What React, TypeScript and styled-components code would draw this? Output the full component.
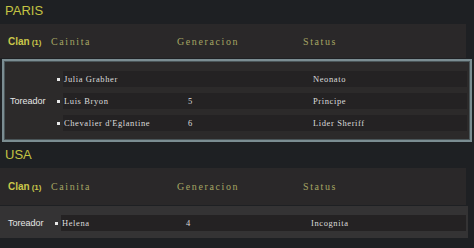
import React from 'react';
import styled, { createGlobalStyle } from 'styled-components';

interface Cainita {
  name: string;
  generacion?: number;
  status: string;
}

interface City {
  name: string;
  clan: string;
  boxed: boolean;
  members: Cainita[];
}

const cities: City[] = [
  {
    name: 'PARIS',
    clan: 'Toreador',
    boxed: true,
    members: [
      { name: 'Julia Grabher', status: 'Neonato' },
      { name: 'Luis Bryon', generacion: 5, status: 'Principe' },
      { name: "Chevalier d'Eglantine", generacion: 6, status: 'Lider Sheriff' },
    ],
  },
  {
    name: 'USA',
    clan: 'Toreador',
    boxed: false,
    members: [{ name: 'Helena', generacion: 4, status: 'Incognita' }],
  },
];

const GlobalStyle = createGlobalStyle`
  html, body {
    margin: 0;
    padding: 0;
    background: #1e2023;
    font-family: "Liberation Sans", Arial, sans-serif;
  }
`;

const Page = styled.div`
  width: 474px;
  height: 248px;
  overflow: hidden;
`;

const CityTitle = styled.div`
  height: 24px;
  line-height: 22px;
  padding-left: 5px;
  font-size: 13px;
  color: #c3c343;

  section + section & {
    margin-top: 2px;
  }
`;

const HeaderRow = styled.div<{ $tall?: boolean }>`
  display: flex;
  align-items: center;
  width: 466px;
  height: ${p => (p.$tall ? 37 : 34)}px;
  background: #2a2829;
  margin-bottom: 1px;
`;

const ClanHead = styled.div`
  width: 43px;
  padding-left: 8px;
  font-size: 10px;
  font-weight: bold;
  color: #c9c74a;

  small {
    font-size: 8px;
    margin-left: 2px;
  }
`;

const ColHead = styled.div<{ $w?: number }>`
  width: ${p => (p.$w ? `${p.$w}px` : 'auto')};
  font-family: "Liberation Serif", "Times New Roman", serif;
  font-size: 10px;
  letter-spacing: 1.6px;
  color: #a5a563;
`;

const GroupRow = styled.div<{ $boxed: boolean }>`
  display: flex;
  align-items: center;
  box-sizing: border-box;
  width: ${p => (p.$boxed ? 470 : 468)}px;
  margin-left: ${p => (p.$boxed ? 2 : 0)}px;
  padding: ${p => (p.$boxed ? '10px 3px 9px 0' : '9px 2px 7px 0')};
  background: ${p => (p.$boxed ? '#2c2a2a' : '#343334')};
  border: ${p => (p.$boxed ? '2px solid #7b8d92' : 'none')};
  box-shadow: ${p => (p.$boxed ? 'inset 0 0 0 1px #4a5558' : 'none')};
`;

const ClanLabel = styled.div<{ $boxed: boolean }>`
  box-sizing: border-box;
  width: ${p => (p.$boxed ? 51 : 53)}px;
  padding-left: ${p => (p.$boxed ? 6 : 8)}px;
  font-size: 9px;
  color: #e6e6e6;
`;

const Members = styled.ul`
  flex: 1;
  margin: 0;
  padding: 0;
  list-style: none;
  display: flex;
  flex-direction: column;
  gap: 6px;
`;

const Member = styled.li`
  display: flex;
  align-items: center;

  &::before {
    content: '';
    width: 3px;
    height: 3px;
    margin: 0 3px 0 2px;
    background: #e8e8e8;
  }
`;

const Bar = styled.div`
  flex: 1;
  display: grid;
  grid-template-columns: 124px 125px 1fr;
  align-items: center;
  height: 16px;
  padding-left: 1px;
  background: #242223;
  font-family: "Liberation Serif", "Times New Roman", serif;
  font-size: 8.5px;
  letter-spacing: 0.6px;
  color: #dcdcdc;
`;

const App = () => (
  <Page>
    <GlobalStyle />
    {cities.map(city => (
      <section key={city.name}>
        <CityTitle>{city.name}</CityTitle>
        <HeaderRow $tall={!city.boxed}>
          <ClanHead>
            Clan<small>(1)</small>
          </ClanHead>
          <ColHead $w={126}>Cainita</ColHead>
          <ColHead $w={126}>Generacion</ColHead>
          <ColHead>Status</ColHead>
        </HeaderRow>
        <GroupRow $boxed={city.boxed}>
          <ClanLabel $boxed={city.boxed}>{city.clan}</ClanLabel>
          <Members>
            {city.members.map(m => (
              <Member key={m.name}>
                <Bar>
                  <span>{m.name}</span>
                  <span>{m.generacion ?? ''}</span>
                  <span>{m.status}</span>
                </Bar>
              </Member>
            ))}
          </Members>
        </GroupRow>
      </section>
    ))}
  </Page>
);

export default App;
